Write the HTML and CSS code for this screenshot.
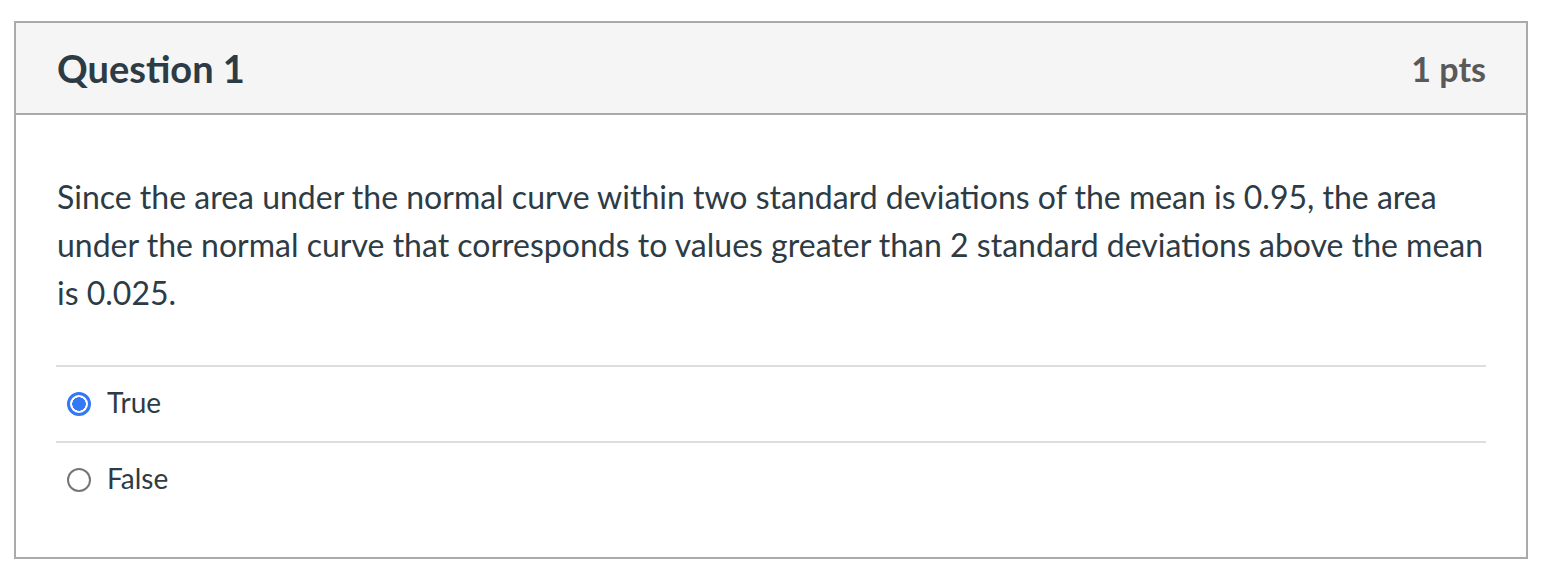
FILE: index.html
```html
<!DOCTYPE html>
<html>
<head>
<meta charset="utf-8">
<link rel="stylesheet" href="styles.css">
</head>
<body>
<div class="card">
  <div class="header">
    <h2 class="title">Question 1</h2>
    <span class="pts">1 pts</span>
  </div>
  <div class="body">
    <p class="question">Since the area under the normal curve within two standard deviations of the mean is 0.95, the area under the normal curve that corresponds to values greater than 2 standard deviations above the mean is 0.025.</p>
    <div class="answers">
      <div class="answer">
        <span class="radio checked"></span>
        <span class="label">True</span>
      </div>
      <div class="answer">
        <span class="radio"></span>
        <span class="label">False</span>
      </div>
    </div>
  </div>
</div>
</body>
</html>
```
FILE: styles.css
```css
html, body {
  margin: 0;
  padding: 0;
  background: #ffffff;
}
body {
  font-family: Lato, "Liberation Sans", sans-serif;
  color: #2d3b45;
}
.card {
  margin: 21px 0 0 14px;
  width: 1510px;
  height: 534px;
  border: 2px solid #aaaaaa;
  display: flex;
  flex-direction: column;
}
.header {
  height: 90px;
  background: #f5f5f5;
  border-bottom: 2px solid #aaaaaa;
  display: flex;
  align-items: center;
  justify-content: space-between;
  padding: 0 40px 0 41px;
}
.title {
  margin: 0;
  font-size: 38px;
  font-weight: 700;
  color: #2d3b45;
}
.pts {
  font-size: 34px;
  font-weight: 700;
  color: #595959;
}
.body {
  padding: 58px 40px 0 40px;
}
.question {
  margin: 0 0 48px 1px;
  font-size: 32px;
  line-height: 48px;
}
.answer {
  border-top: 2px solid #dddddd;
  height: 74px;
  display: flex;
  align-items: center;
  padding-left: 11px;
}
.radio {
  box-sizing: border-box;
  width: 24px;
  height: 24px;
  border-radius: 50%;
  border: 2px solid #767676;
  margin-right: 16px;
  flex: none;
}
.radio.checked {
  border: 3px solid #3478f6;
  background: radial-gradient(circle, #3478f6 0 6.5px, #ffffff 7px);
}
.label {
  font-size: 28px;
  line-height: 34px;
  padding-bottom: 4px;
}
```
